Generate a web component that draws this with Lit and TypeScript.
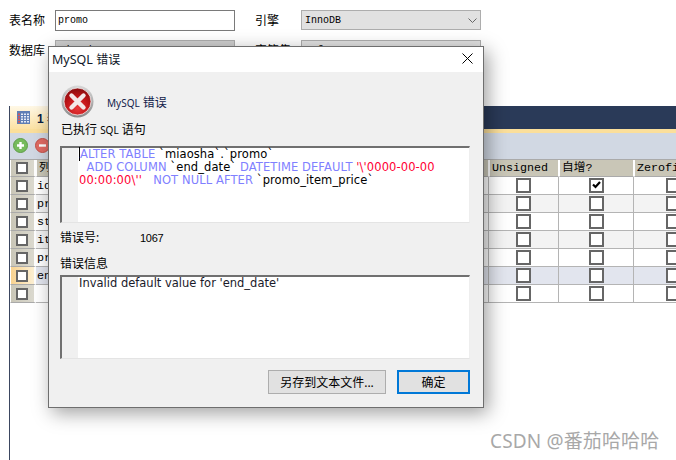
import { LitElement, html, css, svg } from "lit";
import { customElement } from "lit/decorators.js";

const CJK = css`"Noto Sans CJK SC", sans-serif`;
const rows = [
  ["id", true, ""],
  ["promo_name", false, "alt"],
  ["start_date", false, ""],
  ["item_id", false, "alt"],
  ["promo_item_price", false, ""],
  ["end_date", false, "cur"],
  ["", false, ""],
];

@customElement("app-root")
export class AppRoot extends LitElement {
  static styles = css`
    :host { display: block; width: 676px; height: 460px; position: relative; overflow: hidden; background: #fff;
      font: 12px "Noto Sans", ${CJK}; color: #000; }
    .form { display: grid; grid-template-columns: 46px 180px 20px 46px 180px; row-gap: 9px; padding: 10px 0 0 9px; align-items: start; }
    .lbl { font-size: 12px; line-height: 21px; }
    .input { height: 21px; box-sizing: border-box; border: 1px solid #7a7a7a; padding-left: 2px; font: 10px/19px "Liberation Mono", monospace; }
    .select { height: 20px; box-sizing: border-box; border: 1px solid #adadad; background: #e1e1e1; padding: 1px 0 0 3px; display: flex; align-items: center; justify-content: space-between; font: 10px "Liberation Mono", monospace; }
    .select svg { margin-right: 3px; }
    .select.dis { background: #cfcfcf; }
    .gap { grid-column: 3; }
    .panel { margin: 45px 0 0 9px; height: 354px; border-left: 1px solid #3b4660; }
    .tabs { height: 23px; background: #2a3a58; }
    .tab { width: 60px; height: 23px; box-sizing: border-box; background: linear-gradient(#fff8e6, #fce2a4); display: flex; align-items: center; gap: 7px; padding-left: 7px; font: bold 12px "Liberation Sans", ${CJK}; color: #0a1f44; }
    .goldline { height: 4px; background: #fbdf9b; }
    .toolbar { height: 26px; box-sizing: border-box; padding: 0 0 1px 3px; background: #d1d8e3; display: flex; align-items: center; gap: 7px; }
    .table { display: grid; grid-template-columns: 26px 453px 70px 75px 80px; font: 11.7px "Liberation Mono", ${CJK}; border-top: 1px solid #aaa; }
    .hd { height: 17px; box-sizing: border-box; background: #c9c6b7; border-left: 1px solid #fff; border-right: 1px solid #fff; border-bottom: 1px solid #aaa; padding-left: 2px; line-height: 16px; white-space: nowrap; overflow: hidden; }
    .rh { height: 18px; box-sizing: border-box; background: linear-gradient(90deg, #c9c6b7, #dcdad0); border-left: 1px solid #fff; border-right: 2px solid #fff; border-bottom: 1px solid #aaa; padding-right: 1px; display: flex; align-items: center; justify-content: center; }
    .rh.hd0 { height: 17px; }
    .rh.cur { background: linear-gradient(90deg, #f8d28f, #fdf0d4); }
    .c { height: 18px; box-sizing: border-box; border-right: 1px solid #b4b4b4; border-bottom: 1px solid #b4b4b4; display: flex; align-items: center; justify-content: center; }
    .c.nm { justify-content: flex-start; padding-left: 1px; }
    .alt { background: #f3f3f3; }
    .cur { background: #e2e5ee; }
    .box { width: 15px; height: 15px; box-sizing: border-box; border: 2px solid #666; background: #fff; display: block; }
    .rh .box { width: 12px; height: 12px; }
    .dlg { position: absolute; left: 48px; top: 46px; width: 436px; height: 362px; box-sizing: border-box; border: 1px solid #6e6e6e; background: #f0f0f0; box-shadow: 4px 5px 18px rgba(0,0,0,.38); display: flex; flex-direction: column; }
    .ttl { height: 25px; background: #fff; display: flex; justify-content: space-between; align-items: center; padding: 0 10px 2px 3px; box-sizing: border-box; color: #101828; }
    .ttl .t { font-size: 12.5px; }
    .ttl .t b { font-weight: 400; font-size: 12px; }
    .body { padding: 13px 13px 0 11px; flex: 1; display: flex; flex-direction: column; }
    .head { display: flex; align-items: center; gap: 13px; height: 33px; padding-left: 1px; color: #12204a; }
    .lat { font-size: 10px; }
    .sub { margin: 2px 0 0 1px; line-height: 20px; }
    .box2 { box-sizing: border-box; width: 410px; border: 2px solid; border-color: #707070 #eee #e4e4e4 #707070; background: linear-gradient(90deg, #f0f0f0 16px, #fff 16px); border-width: 2px 1px 1px 2px; padding: 0 0 0 17px; font: 11.5px/13px "DejaVu Sans", sans-serif; white-space: pre-wrap; }
    .sql { height: 77px; margin-top: 6px; color: #000; letter-spacing: .1px; }
    .k { color: #8080ff; }
    .s { color: #ff0033; }
    .caret { border-left: 1px solid #000; }
    .err { height: 84px; color: #1a1a2a; }
    .no { display: flex; margin-top: 7px; line-height: 16px; }
    .no span:first-child { width: 80px; }
    .no .num { font: 11px/16px "Liberation Sans", sans-serif; letter-spacing: -.3px; }
    .info { margin-top: 10px; line-height: 16px; margin-bottom: 3px; }
    .btns { display: flex; justify-content: flex-end; gap: 11px; margin-top: 11px; }
    .btn { height: 24px; box-sizing: border-box; background: #e1e1e1; border: 1px solid #adadad; display: flex; align-items: center; justify-content: center; }
    .save { width: 118px; }
    .ok { width: 73px; border: 2px solid #0078d7; }
    .wm { position: absolute; left: 490px; top: 430px; font-size: 19px; line-height: 22px; color: #a8a8a8; letter-spacing: .15px; }
  `;

  private chev() {
    return html`<svg width="9" height="6" viewBox="0 0 9 6" fill="none" stroke="#666"><path d="M.5.5l4 4 4-4"/></svg>`;
  }

  private errIcon() {
    return html`<svg width="33" height="33" viewBox="0 0 33 33">
      <defs>
        <radialGradient id="rg" cx=".5" cy=".75" r=".7"><stop offset="0" stop-color="#e8383a"/><stop offset=".6" stop-color="#c01518"/><stop offset="1" stop-color="#8f0e10"/></radialGradient>
        <linearGradient id="rim" x1="0" y1="0" x2="0" y2="1"><stop offset="0" stop-color="#d8d8d8"/><stop offset="1" stop-color="#8a8a8a"/></linearGradient>
      </defs>
      <circle cx="16.5" cy="16.5" r="16" fill="url(#rim)"/>
      <circle cx="16.5" cy="16.5" r="13.5" fill="url(#rg)" stroke="#fff" stroke-opacity=".7"/>
      <path d="M10.5 10.5l12 12M22.5 10.5l-12 12" stroke="#f3e9e9" stroke-width="4.4" stroke-linecap="round"/>
    </svg>`;
  }

  private tableIcon() {
    return html`<svg width="13" height="13" viewBox="0 0 13 13">
      <rect width="13" height="13" fill="#5f7fb5"/>
      ${[1, 4, 7, 10].map((x) =>
        [2.5, 5, 7.5, 10].map(
          (y) => svg`<rect x="${x}" y="${y}" width="2" height="1.5" fill="${x === 1 ? "#e05050" : "#e6ecf6"}"/>`
        )
      )}
    </svg>`;
  }

  private round(c1: string, c2: string, plus: boolean) {
    return html`<svg width="15" height="15" viewBox="0 0 15 15">
      <circle cx="7.5" cy="7.5" r="7" fill="${c1}" stroke="${c2}"/>
      <path d="${plus ? "M7.5 4v7M4 7.5h7" : "M4 7.5h7"}" stroke="#fff" stroke-width="2.4"/>
    </svg>`;
  }

  render() {
    return html`
      <div class="form">
        <div class="lbl">表名称</div>
        <div class="input">promo</div>
        <div class="gap"></div>
        <div class="lbl">引擎</div>
        <div class="select">InnoDB ${this.chev()}</div>
        <div class="lbl">数据库</div>
        <div class="select dis">miaosha</div>
        <div class="gap"></div>
        <div class="lbl">字符集</div>
        <div class="select">utf8 ${this.chev()}</div>
      </div>
      <div class="panel">
        <div class="tabs"><div class="tab">${this.tableIcon()}<span>1 表</span></div></div>
        <div class="goldline"></div>
        <div class="toolbar">${this.round("#76bb5c", "#5f9c49", true)}${this.round("#e06a63", "#c05048", false)}</div>
        <div class="table">
          <div class="rh hd0"><span class="box"></span></div>
          <div class="hd">列名称</div>
          <div class="hd">Unsigned</div>
          <div class="hd">自增?</div>
          <div class="hd">Zerofill?</div>
          ${rows.map(
            ([n, inc, k]) => html`
              <div class="rh ${k === "cur" ? "cur" : ""}"><span class="box"></span></div>
              <div class="c nm ${k}">${n}</div>
              <div class="c ${k}"><span class="box"></span></div>
              <div class="c ${k}">
                ${inc
                  ? html`<svg width="15" height="15" viewBox="0 0 15 15"><rect x="1" y="1" width="13" height="13" fill="#fff" stroke="#666" stroke-width="2"/><path d="M4 6.5l2.5 2.5 4.5-5" fill="none" stroke="#000" stroke-width="2.2"/></svg>`
                  : html`<span class="box"></span>`}
              </div>
              <div class="c ${k}"><span class="box"></span></div>
            `
          )}
        </div>
      </div>

      <div class="dlg">
        <div class="ttl">
          <span class="t">MySQL <b>错误</b></span>
          <svg width="11" height="11" viewBox="0 0 11 11" fill="none" stroke="#000"><path d="M.5.5l10 10M10.5.5l-10 10"/></svg>
        </div>
        <div class="body">
          <div class="head">${this.errIcon()}<span><span class="lat">MySQL</span> 错误</span></div>
          <div class="sub">已执行 <span class="lat">SQL</span> 语句</div>
          <div class="box2 sql"><span class="caret"></span><span class="k">ALTER TABLE</span> \`miaosha\`.\`promo\`
  <span class="k">ADD COLUMN</span> \`end_date\` <span class="k">DATETIME DEFAULT</span> <span class="s">'\\'0000-00-00
00:00:00\\''</span>   <span class="k">NOT NULL AFTER</span> \`promo_item_price\`</div>
          <div class="no"><span>错误号:</span><span class="num">1067</span></div>
          <div class="info">错误信息</div>
          <div class="box2 err">Invalid default value for 'end_date'</div>
          <div class="btns">
            <div class="btn save">另存到文本文件...</div>
            <div class="btn ok">确定</div>
          </div>
        </div>
      </div>
      <div class="wm">CSDN @番茄哈哈哈</div>
    `;
  }
}
